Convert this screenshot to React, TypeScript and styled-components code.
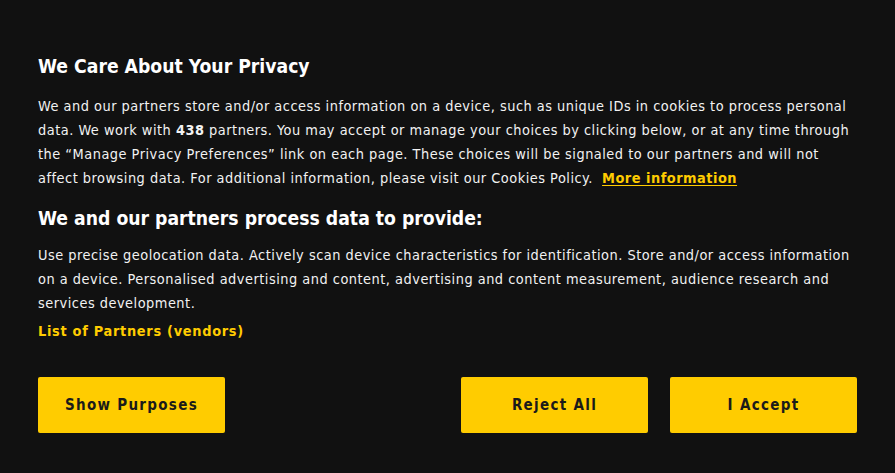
import * as React from 'react'
import styled, { createGlobalStyle } from 'styled-components'

const GlobalStyle = createGlobalStyle`
  html, body {
    margin: 0;
    padding: 0;
    background: #111111;
  }
  body {
    font-family: "DejaVu Sans Condensed", "DejaVu Sans", Verdana, sans-serif;
    -webkit-font-smoothing: antialiased;
  }
`

const Banner = styled.div`
  width: 895px;
  height: 473px;
  box-sizing: border-box;
  padding: 54px 38px 0;
  background: #111111;
  color: #f2f2f2;
`

const Title = styled.h2`
  margin: 0 0 14px;
  font-size: 19.2px;
  line-height: 26px;
  font-weight: 700;
  color: #ffffff;
`

const SubTitle = styled(Title)`
  margin: 16px 0 11px;
`

const Text = styled.p`
  margin: 0;
  font-size: 14.4px;
  line-height: 24px;
  letter-spacing: 0.5px;
  white-space: nowrap;
`

const Strong = styled.b`
  font-weight: 700;
`

const Link = styled.a<{ $underline?: boolean }>`
  color: #ffcc00;
  font-weight: 700;
  font-size: 14.4px;
  letter-spacing: ${(p) => (p.$underline ? '0.5px' : '0.7px')};
  text-decoration: ${(p) => (p.$underline ? 'underline' : 'none')};
  text-underline-offset: 2px;
  cursor: pointer;
`

const PartnersRow = styled.div`
  margin-top: 4px;
  line-height: 24px;
`

const Actions = styled.div`
  display: flex;
  align-items: center;
  margin-top: 34px;
  gap: 22px;
`

const Spacer = styled.div`
  flex: 1;
`

const Button = styled.button`
  width: 187px;
  height: 56px;
  border: none;
  border-radius: 2px;
  background: #ffcc00;
  color: #1a1a1a;
  font-family: inherit;
  font-size: 15px;
  font-weight: 700;
  letter-spacing: 1.3px;
  cursor: pointer;
`

const App: React.FC = () => (
  <>
    <GlobalStyle />
    <Banner>
      <Title>We Care About Your Privacy</Title>
      <Text>
        We and our partners store and/or access information on a device, such as unique IDs in cookies to process personal
        <br />
        data. We work with <Strong>438</Strong> partners. You may accept or manage your choices by clicking below, or at any time through
        <br />
        the “Manage Privacy Preferences” link on each page. These choices will be signaled to our partners and will not
        <br />
        affect browsing data. For additional information, please visit our Cookies Policy.&nbsp;&nbsp;<Link $underline>More information</Link>
      </Text>
      <SubTitle>We and our partners process data to provide:</SubTitle>
      <Text>
        Use precise geolocation data. Actively scan device characteristics for identification. Store and/or access information
        <br />
        on a device. Personalised advertising and content, advertising and content measurement, audience research and
        <br />
        services development.
      </Text>
      <PartnersRow>
        <Link>List of Partners (vendors)</Link>
      </PartnersRow>
      <Actions>
        <Button>Show Purposes</Button>
        <Spacer />
        <Button>Reject All</Button>
        <Button>I Accept</Button>
      </Actions>
    </Banner>
  </>
)

export default App
